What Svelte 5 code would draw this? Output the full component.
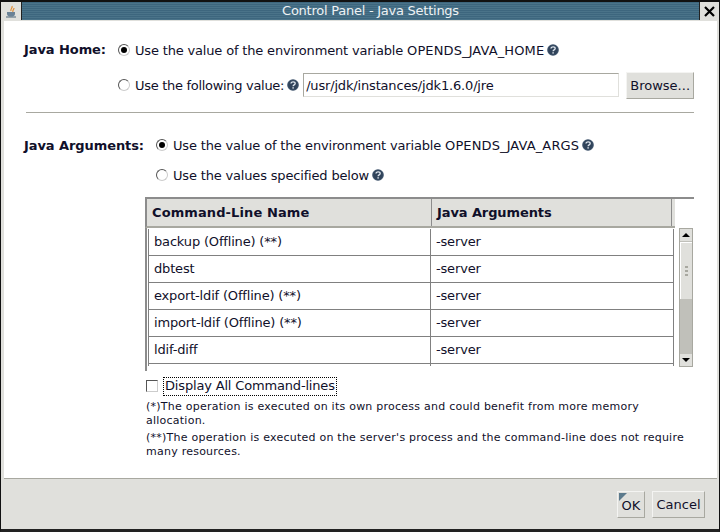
<script>
	const rows = [
		'backup (Offline) (**)',
		'dbtest',
		'export-ldif (Offline) (**)',
		'import-ldif (Offline) (**)',
		'ldif-diff'
	];
</script>

{#snippet help()}
	<svg class="help" width="12" height="12" viewBox="0 0 12 12">
		<circle cx="6" cy="6" r="5.8" fill="#3b5068" />
		<circle cx="6" cy="6" r="4.6" fill="#30435a" />
		<path d="M4 4.6 C4 2.4 8.2 2.4 8.2 4.6 C8.2 6 6.2 5.8 6.1 7.2" fill="none" stroke="#dfe6ee" stroke-width="1.3" />
		<rect x="5.4" y="8.2" width="1.4" height="1.4" fill="#dfe6ee" />
	</svg>
{/snippet}

{#snippet radio(checked)}
	<span class="radio" class:checked></span>
{/snippet}

<div class="window">
	<div class="titlebar">
		<div class="appicon">
			<svg width="13" height="13" viewBox="0 0 13 13">
				<path d="M7 1 C8 3 5 4 6 6 M9 3 C9 5 7 5 8 7" fill="none" stroke="#e08a30" stroke-width="1.2" />
				<path d="M2 7 H10 V9 C10 11 8 11.5 6 11.5 C4 11.5 2 11 2 9 Z" fill="#6a8296" />
				<path d="M1 12 H11" stroke="#4a6478" />
			</svg>
		</div>
		<div class="title">Control Panel - Java Settings</div>
		<div class="close">
			<svg width="11" height="11" viewBox="0 0 11 11">
				<path d="M1 1 L10 10 M10 1 L1 10" stroke="#000" stroke-width="2.2" />
			</svg>
		</div>
	</div>

	<div class="content">
		<section class="home">
			<div class="label">Java Home:</div>
			<div class="options">
				<div class="option">
					{@render radio(true)}
					<span>Use the value of the environment variable <span class="var">OPENDS_JAVA_HOME</span></span>
					{@render help()}
				</div>
				<div class="option second">
					{@render radio(false)}
					<span class="narrow">Use the following value:</span>
					{@render help()}
					<input class="path" value="/usr/jdk/instances/jdk1.6.0/jre" />
					<button class="btn browse">Browse...</button>
				</div>
			</div>
		</section>

		<hr />

		<section class="args">
			<div class="label">Java Arguments:</div>
			<div class="options">
				<div class="option">
					{@render radio(true)}
					<span>Use the value of the environment variable <span class="var">OPENDS_JAVA_ARGS</span></span>
					{@render help()}
				</div>
				<div class="option third">
					{@render radio(false)}
					<span>Use the values specified below</span>
					{@render help()}
				</div>
			</div>
		</section>

		<div class="tablewrap">
			<div class="head">
				<div class="th name">Command-Line Name</div>
				<div class="th value">Java Arguments</div>
			</div>
			<div class="body">
				<div class="rows">
					{#each rows as row}
						<div class="tr">
							<div class="td name">{row}</div>
							<div class="td value">-server</div>
						</div>
					{/each}
					<div class="tr stub">
						<div class="td name"></div>
						<div class="td value"></div>
					</div>
				</div>
				<div class="scrollbar">
					<div class="arrow"><span class="up"></span></div>
					<div class="thumb"><i></i><i></i><i></i></div>
					<div class="track"></div>
					<div class="arrow"><span class="down"></span></div>
				</div>
			</div>
		</div>

		<div class="check">
			<span class="box"></span>
			<span class="focus">Display All Command-lines</span>
		</div>

		<div class="notes">
			<p>(*)The operation is executed on its own process and could benefit from more memory allocation.</p>
			<p>(**)The operation is executed on the server's process and the command-line does not require many resources.</p>
		</div>
	</div>

	<div class="footer">
		<button class="btn ok"><span class="corner"></span>OK</button>
		<button class="btn cancel">Cancel</button>
	</div>
</div>

<style>
	:global(body) {
		margin: 0;
		background: #000;
	}

	.window {
		width: 720px;
		height: 532px;
		box-sizing: border-box;
		display: flex;
		flex-direction: column;
		background: #e0e0dc;
		border-top: 2px solid #111;
		border-left: 1px solid #111;
		border-right: 1px solid #111;
		border-bottom: 3px solid #222;
		font-family: "DejaVu Sans", sans-serif;
		font-size: 13px;
		letter-spacing: -0.17px;
		color: #10102a;
		overflow: hidden;
	}

	.titlebar {
		height: 18px;
		display: flex;
		align-items: stretch;
		background: repeating-linear-gradient(#3d667e 0 1px, #4a7389 1px 2px);
		flex: none;
	}

	.appicon {
		width: 20px;
		background: #e0e0dc;
		display: flex;
		align-items: center;
		justify-content: center;
		border-right: 1px solid #222;
	}

	.title {
		flex: 1;
		text-align: center;
		color: #eef2f4;
		line-height: 17px;
		padding-left: 20px;
		letter-spacing: -0.25px;
	}

	.close {
		width: 19px;
		background: #e0e0dc;
		display: flex;
		align-items: center;
		justify-content: center;
		border-left: 1px solid #222;
	}

	.content {
		flex: 1;
		background: #fff;
		margin: 1px 2px 0 3px;
		padding: 19px 0 0 20px;
		border-bottom: 1px solid #a8a8a0;
		min-height: 0;
	}

	section {
		display: flex;
		align-items: flex-start;
	}

	.label {
		font-weight: bold;
		line-height: 20px;
		white-space: nowrap;
		letter-spacing: -0.08px;
	}

	.home .label {
		width: 94px;
	}

	.args .label {
		width: 132px;
		margin-top: 1px;
	}

	.option {
		display: flex;
		align-items: center;
		height: 20px;
		white-space: nowrap;
	}

	.option.second {
		margin-top: 12px;
		height: 26px;
	}

	.option.third {
		margin-top: 10px;
	}

	.var {
		letter-spacing: 0.12px;
	}

	.narrow {
		letter-spacing: -0.3px;
	}

	.radio {
		width: 12px;
		height: 12px;
		box-sizing: border-box;
		border-radius: 50%;
		border: 1px solid #555;
		border-right-color: #ccc;
		border-bottom-color: #ccc;
		background: #fff;
		margin-right: 5px;
		flex: none;
		display: flex;
		align-items: center;
		justify-content: center;
	}

	.radio.checked::after {
		content: "";
		width: 6px;
		height: 6px;
		border-radius: 50%;
		background: #000;
	}

	.help {
		margin-left: 3px;
		flex: none;
	}

	.path {
		width: 316px;
		height: 24px;
		box-sizing: border-box;
		margin-left: 4px;
		border: 1px solid #e0e0dc;
		border-top-color: #a8a8a0;
		border-left-color: #a8a8a0;
		font: inherit;
		letter-spacing: inherit;
		color: inherit;
		padding: 0 2px;
		outline: none;
	}

	.btn {
		font: inherit;
		letter-spacing: 0;
		color: inherit;
		background: #e0e0dc;
		border: 1px solid #f4f4f2;
		border-right-color: #a8a8a0;
		border-bottom-color: #a8a8a0;
		padding: 0;
		box-sizing: border-box;
	}

	.browse {
		width: 68px;
		height: 27px;
		margin-left: 7px;
	}

	hr {
		width: 668px;
		height: 1px;
		border: 0;
		background: #a8a8a0;
		margin: 14px 0 22px 2px;
	}

	.tablewrap {
		width: 549px;
		margin: 12px 0 0 121px;
		border-top: 2px solid #8c8c8c;
	}

	.head {
		display: flex;
		height: 29px;
		box-sizing: border-box;
		border-left: 2px solid #8c8c8c;
		border-bottom: 2px solid #a8a8a0;
		width: 530px;
		background: #e0e0dc;
		font-weight: bold;
		letter-spacing: 0.1px;
	}

	.th {
		line-height: 27px;
		box-sizing: border-box;
		padding-left: 5px;
		border-right: 1px solid #8c8c8c;
	}

	.th.name {
		width: 285px;
	}

	.th.value {
		width: 240px;
		letter-spacing: -0.1px;
	}

	.body {
		display: flex;
		height: 139px;
		align-items: flex-start;
	}

	.rows {
		width: 529px;
		box-sizing: border-box;
		border-left: 2px solid #8c8c8c;
		padding: 1px 0 0 1px;
		height: 143px;
		flex: none;
	}

	.tr {
		display: flex;
		height: 27px;
		box-sizing: border-box;
		border-bottom: 1px solid #808080;
	}

	.tr.stub {
		height: 2px;
		border-bottom: 0;
	}

	.td {
		box-sizing: border-box;
		line-height: 26px;
		padding-left: 5px;
		border-right: 1px solid #808080;
		border-left: 1px solid #808080;
	}

	.td.name {
		width: 282px;
		border-right: 0;
	}

	.td.value {
		flex: 1;
	}

	.scrollbar {
		width: 14px;
		margin-left: 5px;
		height: 139px;
		box-sizing: border-box;
		border: 1px solid #a8a8a0;
		display: flex;
		flex-direction: column;
		background: #c0c0ba;
	}

	.arrow {
		height: 12px;
		background: #e0e0dc;
		display: flex;
		align-items: center;
		justify-content: center;
		flex: none;
	}

	.up {
		border: 4px solid transparent;
		border-top: 0;
		border-bottom: 4px solid #000;
	}

	.down {
		border: 4px solid transparent;
		border-bottom: 0;
		border-top: 4px solid #000;
	}

	.thumb {
		height: 57px;
		margin-top: 1px;
		background: #e0e0dc;
		border-top: 1px solid #fff;
		border-left: 1px solid #fff;
		box-sizing: border-box;
		display: flex;
		flex-direction: column;
		align-items: center;
		justify-content: center;
		gap: 2px;
		flex: none;
	}

	.thumb i {
		width: 3px;
		height: 2px;
		background: #a8a8a0;
	}

	.track {
		flex: 1;
	}

	.check {
		display: flex;
		align-items: center;
		margin: 9px 0 0 122px;
		height: 20px;
	}

	.box {
		width: 12px;
		height: 12px;
		box-sizing: border-box;
		border: 1px solid #555;
		border-right-color: #ccc;
		border-bottom-color: #ccc;
		margin-right: 5px;
	}

	.focus {
		border: 1px dotted #000;
		padding: 0 1px 1px;
		line-height: 16px;
	}

	.notes {
		margin: 4px 0 0 122px;
		width: 546px;
		font-size: 11px;
		line-height: 14px;
		letter-spacing: 0.24px;
	}

	.notes p {
		margin: 0 0 3px;
	}

	.footer {
		flex: none;
		height: 50px;
		display: flex;
		justify-content: flex-end;
		align-items: center;
		gap: 7px;
		padding: 0 14px 0 0;
	}

	.ok {
		width: 28px;
		height: 27px;
		position: relative;
		padding-top: 2px;
	}

	.corner {
		position: absolute;
		top: 1px;
		left: 1px;
		border-top: 8px solid #5c7a8c;
		border-right: 8px solid transparent;
	}

	.cancel {
		width: 53px;
		height: 27px;
	}
</style>
